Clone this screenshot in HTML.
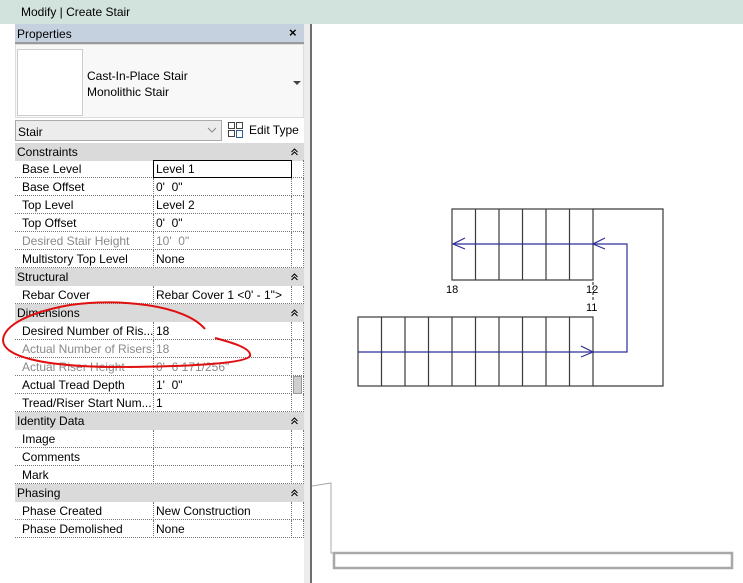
<!DOCTYPE html>
<html><head><meta charset="utf-8"><style>
*{margin:0;padding:0;box-sizing:border-box}
body{width:743px;height:583px;overflow:hidden;background:#fff;font-family:"Liberation Sans",sans-serif;font-size:12px;color:#000;position:relative}
.abs{position:absolute}
.t{white-space:nowrap}
.hdr{position:absolute;left:15px;width:289px;height:18px;background:#dadada;line-height:19px;padding-left:2px}
.hdr svg{position:absolute;right:6px;top:5px}
.row{position:absolute;left:15px;width:289px;height:18px;border-bottom:1px dotted #777;line-height:19px}
.row .n{position:absolute;left:7px}
.row .v{position:absolute;left:138px;width:139px;height:18px;border-left:1px dotted #777;border-right:1px dotted #777;padding-left:2px}
.row .e{position:absolute;right:0;top:0;height:18px;border-right:1px dotted #777;width:1px}
.g{color:#8a8a8a}
</style></head><body>
<div class="abs" style="left:0;top:0;width:743px;height:24px;background:#d2e2dc"></div>
<div class="abs t" style="left:21px;top:5px;font-size:12px">Modify | Create Stair</div>
<div class="abs" style="left:15px;top:24px;width:289px;height:18px;background:#c5d1df"></div>
<div class="abs t" style="left:17px;top:27px">Properties</div>
<div class="abs t" style="left:289px;top:25px;font-size:13px;font-weight:bold">×</div>
<div class="abs" style="left:15px;top:42px;width:289px;height:2px;background:#9a9a9a"></div>
<div class="abs" style="left:15px;top:44px;width:289px;height:74px;background:#f8f8f8;border:1px solid #ddd"></div>
<div class="abs" style="left:17px;top:49px;width:66px;height:67px;background:#fff;border:1px solid #ccc"></div>
<div class="abs t" style="left:87px;top:69px">Cast-In-Place Stair</div>
<div class="abs t" style="left:87px;top:85px">Monolithic Stair</div>
<div class="abs" style="left:293px;top:81px;border-left:4px solid transparent;border-right:4px solid transparent;border-top:4px solid #444"></div>
<div class="abs" style="left:15px;top:120px;width:207px;height:21px;background:#ececec;border:1px solid #aaa"></div>
<div class="abs t" style="left:18px;top:125px">Stair</div>
<svg class="abs" style="left:207px;top:127px" width="10" height="6"><path d="M1 1L5 5L9 1" stroke="#888" fill="none"/></svg>
<svg class="abs" style="left:227px;top:121px" width="18" height="18" viewBox="0 0 18 18" fill="none" stroke="#444" stroke-width="1"><rect x="1.5" y="1.5" width="6" height="6"/><rect x="9.5" y="1.5" width="6" height="6"/><rect x="1.5" y="9.5" width="6" height="6"/><rect x="9.5" y="9.5" width="6" height="7" stroke="#2a5fa0"/></svg>
<div class="abs t" style="left:249px;top:123px">Edit Type</div>
<div class="abs" style="left:15px;top:141px;width:289px;height:2px;background:#fff"></div>

<div class="hdr" style="top:143px">Constraints<svg width="7" height="8"><path d="M0.5 4L3.5 1L6.5 4M0.5 7L3.5 4L6.5 7" stroke="#000" fill="none"/></svg></div>
<div class="row" style="top:160px"><span class="n">Base Level</span><span class="v" style="border:1px solid #000;line-height:17px">Level 1</span><span class="e"></span></div>
<div class="row" style="top:178px"><span class="n">Base Offset</span><span class="v">0'&nbsp; 0"</span><span class="e"></span></div>
<div class="row" style="top:196px"><span class="n">Top Level</span><span class="v">Level 2</span><span class="e"></span></div>
<div class="row" style="top:214px"><span class="n">Top Offset</span><span class="v">0'&nbsp; 0"</span><span class="e"></span></div>
<div class="row g" style="top:232px"><span class="n">Desired Stair Height</span><span class="v">10'&nbsp; 0"</span><span class="e"></span></div>
<div class="row" style="top:250px"><span class="n">Multistory Top Level</span><span class="v">None</span><span class="e"></span></div>
<div class="hdr" style="top:268px">Structural<svg width="7" height="8"><path d="M0.5 4L3.5 1L6.5 4M0.5 7L3.5 4L6.5 7" stroke="#000" fill="none"/></svg></div>
<div class="row" style="top:286px"><span class="n">Rebar Cover</span><span class="v">Rebar Cover 1 &lt;0' - 1"&gt;</span><span class="e"></span></div>
<div class="hdr" style="top:304px">Dimensions<svg width="7" height="8"><path d="M0.5 4L3.5 1L6.5 4M0.5 7L3.5 4L6.5 7" stroke="#000" fill="none"/></svg></div>
<div class="row" style="top:322px"><span class="n">Desired Number of Ris...</span><span class="v">18</span><span class="e"></span></div>
<div class="row g" style="top:340px"><span class="n">Actual Number of Risers</span><span class="v">18</span><span class="e"></span></div>
<div class="row g" style="top:358px"><span class="n">Actual Riser Height</span><span class="v">0'&nbsp; 6 171/256"</span><span class="e"></span></div>
<div class="row" style="top:376px"><span class="n">Actual Tread Depth</span><span class="v">1'&nbsp; 0"</span><span class="e"></span></div>
<div class="row" style="top:394px"><span class="n">Tread/Riser Start Num...</span><span class="v">1</span><span class="e"></span></div>
<div class="hdr" style="top:412px">Identity Data<svg width="7" height="8"><path d="M0.5 4L3.5 1L6.5 4M0.5 7L3.5 4L6.5 7" stroke="#000" fill="none"/></svg></div>
<div class="row" style="top:430px"><span class="n">Image</span><span class="v"></span><span class="e"></span></div>
<div class="row" style="top:448px"><span class="n">Comments</span><span class="v"></span><span class="e"></span></div>
<div class="row" style="top:466px"><span class="n">Mark</span><span class="v"></span><span class="e"></span></div>
<div class="hdr" style="top:484px">Phasing<svg width="7" height="8"><path d="M0.5 4L3.5 1L6.5 4M0.5 7L3.5 4L6.5 7" stroke="#000" fill="none"/></svg></div>
<div class="row" style="top:502px"><span class="n">Phase Created</span><span class="v">New Construction</span><span class="e"></span></div>
<div class="row" style="top:520px"><span class="n">Phase Demolished</span><span class="v">None</span><span class="e"></span></div>
<div class="abs" style="left:293px;top:376px;width:9px;height:18px;background:#cfcfcf;border:1px solid #999"></div>

<div class="abs" style="left:304px;top:24px;width:6px;height:559px;background:#ececec"></div>
<div class="abs" style="left:310px;top:24px;width:2px;height:559px;background:#6e6e6e"></div>

<svg class="abs" style="left:0;top:0" width="743" height="583" viewBox="0 0 743 583">
<g stroke="#3a3a3a" stroke-width="1.2" fill="none">
<rect x="452" y="209" width="141" height="71"/>
<path d="M475.5 209V280M499 209V280M522.5 209V280M546 209V280M569.5 209V280"/>
<rect x="358" y="317" width="235" height="69"/>
<path d="M381.5 317V386M405 317V386M428.5 317V386M452 317V386M475.5 317V386M499 317V386M522.5 317V386M546 317V386M569.5 317V386"/>
<path d="M593 209H663V386H593"/>
<path d="M593 282V300" stroke-dasharray="3 2"/>
</g>
<g stroke="#2e2e9a" stroke-width="1.2" fill="none">
<path d="M453 244H627V352H358"/>
<path d="M465 238L453 244L465 249"/>
<path d="M605 238L593 244L605 249"/>
<path d="M581 346L593 352L581 357"/>
</g>
<g font-family="Liberation Sans,sans-serif" font-size="11" fill="#000">
<text x="446" y="293">18</text><text x="586" y="293">12</text><text x="586" y="311">11</text>
</g>
<path d="M205 329C185 305 120 298 70 305C30 312 4 325 3 340C3 356 40 366 110 367C180 367 245 364 250 356C252 348 230 342 215 338" stroke="#e01010" stroke-width="2" fill="none"/>
<g stroke="#a8a8a8" fill="none">
<path d="M312 486L331 483V553H334" stroke-width="1"/>
<rect x="334" y="553" width="398" height="15" stroke-width="2.5"/>
</g>
</svg>
</body></html>
